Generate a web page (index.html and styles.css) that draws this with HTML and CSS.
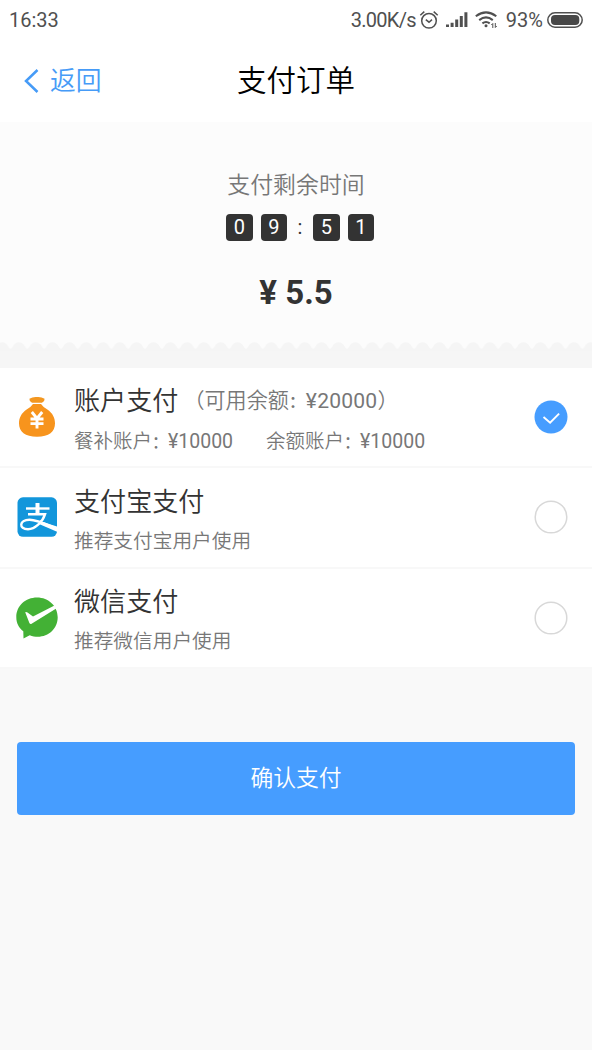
FILE: index.html
```html
<!DOCTYPE html>
<html lang="zh-CN">
<head>
<meta charset="utf-8">
<title>支付订单</title>
<link rel="stylesheet" href="styles.css">
</head>
<body>
<header class="statusbar">
  <span class="clock">16:33</span>
  <span class="speed">3.00K/s</span>
  <svg class="alarm" width="20" height="20" viewBox="0 0 20 20" fill="none" stroke="#505050" stroke-width="1.5"><circle cx="10" cy="10.8" r="7.3"/><path d="M6.8 9.6 10 12.2 13 9.6M1.3 5.2 5.3 1.6M18.7 5.2 14.7 1.6"/></svg>
  <svg class="signal" width="22" height="16" viewBox="0 0 22 16" fill="#505050"><path d="M0 12.5h3V15H0zM4.6 10.8h3V15h-3zM9.2 7.5h3V15h-3zM13.8 4h3v11h-3zM18.4.3h3V15h-3z"/></svg>
  <svg class="wifi" width="23" height="18" viewBox="0 0 23 18" fill="none" stroke="#505050" stroke-width="2"><path d="M.8 5.3Q11 -2.6 21.3 5.3M4.2 9.1Q11 3.6 17.8 9.1M7.4 12.4Q11 9.5 14.7 12.4"/><circle cx="11" cy="14.7" r="1.5" fill="#505050" stroke="none"/><path stroke-width="1" d="M17.8 17v-4.5l-1.5 1.5M20.3 12v4.5l1.5-1.5"/></svg>
  <span class="percent">93%</span>
  <svg class="battery" width="36" height="16" viewBox="0 0 36 16"><rect x=".8" y=".8" width="34.4" height="14.4" rx="7.2" fill="none" stroke="#505050" stroke-width="1.5"/><rect x="4" y="3" width="28.3" height="10" rx="4" fill="#484848"/></svg>
</header>
<nav class="navbar">
  <a class="back"><svg width="16" height="25" viewBox="0 0 16 25" fill="none" stroke="#469bf7" stroke-width="2.5"><path d="M13.5 1 2 12 13.5 23"/></svg><span>返回</span></a>
  <h1 class="title">支付订单</h1>
</nav>
<section class="summary">
  <p class="remain">支付剩余时间</p>
  <div class="timer"><b>0</b><b>9</b><i>:</i><b>5</b><b>1</b></div>
  <p class="amount">¥ 5.5</p>
  <svg class="scallop" width="592" height="26" viewBox="0 0 592 26">
    <defs><pattern id="wave" x="-6.3" y="0" width="16.82" height="26" patternUnits="userSpaceOnUse"><path d="M0 7Q1.6 6 2.6 4C5-1 11.8-1 14.2 4Q15.2 6 16.82 7V26H0z" fill="#f5f5f5"/></pattern></defs>
    <rect width="592" height="26" fill="url(#wave)"/><rect y="9" width="592" height="17" fill="#f6f6f6"/>
  </svg>
</section>
<main class="methods">
  <div class="method">
    <svg class="logo" width="42" height="42" viewBox="0 0 42 42"><path d="M13.4 2.8Q17 .5 21 1 25 .5 28.6 2.8 29 5 26 6.8H16Q13 5 13.4 2.8z" fill="#f39720"/><path d="M17 8h8q2 3 6 5.3c6 4 8 9 8 14C39 36 33 40.8 21 40.8S3 36 3 27.3c0-5 2-10 8-14Q15 11 17 8z" fill="#f7941d"/><path d="m15.8 16 5.2 6.5 5.2-6.5M14.5 23h13M14.5 27.6h13M21 22v10.5" fill="none" stroke="#fff" stroke-width="2.9"/></svg>
    <div class="info"><h2>账户支付<span class="balance">（可用余额<em>：</em><span class="sum">¥20000</span>）</span></h2><p><span class="sub">餐补账户<em>：</em><span class="num">¥10000</span></span><span class="sub">余额账户<em>：</em><span class="num">¥10000</span></span></p></div>
    <svg class="radio" width="34" height="34" viewBox="0 0 34 34"><circle cx="17" cy="17" r="16.5" fill="#469dff"/><path d="m9.5 17 6.6 5.7 9-9" fill="none" stroke="#fff" stroke-width="1.9"/></svg>
  </div>
  <div class="method">
    <svg class="logo" width="42" height="42" viewBox="0 0 42 42"><rect x="1.5" y="1.3" width="39.5" height="39.5" rx="5.5" fill="#1296db"/><g fill="none" stroke="#fff"><path d="M10 12.5h23.5" stroke-width="2.4"/><path d="M21.5 7v11.5" stroke-width="4"/><path d="M12 18.3h17C26.5 26 19 33.2 12 33.2c-9.5 0-9-9.4 1.5-9.4 7 0 14 3.2 27 8.5" stroke-width="2.4"/></g><path d="M25 25.5 41 30.5v5.2L23 28z" fill="#fff"/></svg>
    <div class="info"><h2>支付宝支付</h2><p>推荐支付宝用户使用</p></div>
    <svg class="radio" width="34" height="34" viewBox="0 0 34 34"><circle cx="17" cy="17" r="15.8" fill="#fff" stroke="#d8d8d8" stroke-width="1.5"/></svg>
  </div>
  <div class="method">
    <svg class="logo" width="42" height="42" viewBox="0 0 42 42"><path d="M21 .5C9.5.5.3 8.8.3 20.2c0 6 2.7 10.6 7 14L7.5 41.5 13.7 38.2C28 43.5 41.7 34 41.7 20.2 41.7 9 32.5.5 21 .5z" fill="#43b135"/><path d="M9.2 15.2Q10.3 14.6 11.5 15.5L17 19.5 38.5 8.6 40.2 11.4 15.6 26.7Q14.2 27.5 13.4 26z" fill="#fff"/></svg>
    <div class="info"><h2>微信支付</h2><p>推荐微信用户使用</p></div>
    <svg class="radio" width="34" height="34" viewBox="0 0 34 34"><circle cx="17" cy="17" r="15.8" fill="#fff" stroke="#d8d8d8" stroke-width="1.5"/></svg>
  </div>
</main>
<button class="confirm">确认支付</button>
</body>
</html>
```
FILE: styles.css
```css
* { box-sizing: border-box; margin: 0; padding: 0; }
body { width: 592px; height: 1050px; overflow: hidden; background: #f9f9f9; color: #333; font-family: Roboto, "Noto Sans CJK SC", sans-serif; }
svg { display: block; flex: none; }
em, i { font-style: normal; }
.statusbar { display: flex; align-items: center; height: 40px; padding: 0 9px; background: #fff; color: #505050; font-size: 20px; line-height: 40px; }
.clock { margin-right: auto; }
.speed { letter-spacing: -0.7px; }
.alarm { margin-left: 3px; }
.signal { margin-left: 7px; }
.wifi { margin-left: 7px; }
.percent { margin: 0 4px 0 8px; }
.navbar { display: grid; grid-template-columns: 120px 1fr 120px; align-items: center; height: 82px; background: #fff; }
.back { display: flex; align-items: center; gap: 10px; padding-left: 24px; color: #469bf7; font-size: 25.8px; font-weight: 350; line-height: 40px; }
.title { text-align: center; color: #000; font-size: 29.5px; font-weight: 350; line-height: 40px; }
.summary { display: flex; flex-direction: column; align-items: center; height: 246px; padding-top: 48px; background: #fcfcfc; }
.remain { color: #777; font-size: 22.9px; font-weight: 350; line-height: 32px; }
.timer { display: flex; gap: 8px; margin: 12px 0 0 8px; }
.timer b, .timer i { width: 26.5px; height: 27px; font-size: 20px; font-weight: 400; line-height: 27px; text-align: center; }
.timer b { border-radius: 4px; background: #333; color: #fff; }
.timer i { width: 10px; }
.amount { margin-top: 32px; font-size: 33px; font-weight: 700; line-height: 40px; }
.scallop { margin-top: auto; }
.methods { background: #fff; }
.method { display: flex; align-items: center; height: 100.33px; padding: 0 24px 0 16px; border-bottom: 2px solid #f8f8f8; }
.info { flex: 1; margin-left: 16px; padding-top: 8px; font-weight: 350; white-space: nowrap; }
.info h2 { display: flex; font-size: 26.1px; font-weight: 350; line-height: 40px; }
.info p { display: flex; gap: 33px; color: #777; font-size: 19.7px; line-height: 39px; }
.sub { font-size: 19.5px; }
.sub em { font-size: 16px; font-weight: 500; }
.num { font-weight: 400; }
.balance { margin-left: 5px; color: #777; font-size: 21.1px; }
.balance em { font-size: 17px; font-weight: 500; }
.sum { font-weight: 400; letter-spacing: 0.2px; }
.confirm { display: block; width: 558px; height: 73px; margin: 73px 17px 0; border: 0; border-radius: 4px; background: #469dff; color: #fff; font: 350 22.8px/73px Roboto, "Noto Sans CJK SC", sans-serif; }
```
